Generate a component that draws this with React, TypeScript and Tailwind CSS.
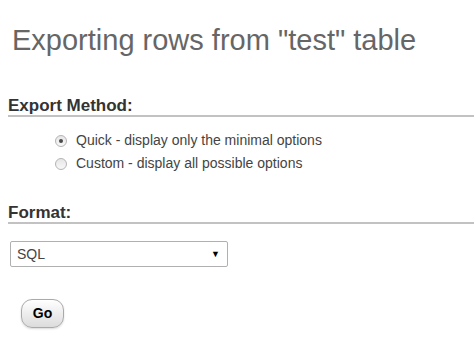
import { useState } from "react";

const options = [
  { id: "quick", label: "Quick - display only the minimal options" },
  { id: "custom", label: "Custom - display all possible options" },
];

function Radio({ checked }: { checked: boolean }) {
  return (
    <span className="flex h-[12px] w-[12px] shrink-0 items-center justify-center rounded-full border border-[#b4b4b4] bg-gradient-to-b from-[#e6e6e6] to-[#f8f8f8]">
      {checked && <span className="h-[4px] w-[4px] rounded-full bg-[#4a4a4a]" />}
    </span>
  );
}

export default function App() {
  const [method, setMethod] = useState("quick");

  return (
    <div className="h-[364px] w-[474px] overflow-hidden bg-white font-['Liberation_Sans',Arial,sans-serif]">
      <h2 className="pl-[12px] pt-[24px] text-[29px] leading-[32px] font-normal text-[#666]">
        Exporting rows from "test" table
      </h2>

      <h3 className="ml-[8px] mt-[40px] border-b-2 border-[#c2c2c2] text-[17px] font-bold leading-[19px] text-[#333]">
        Export Method:
      </h3>

      <div className="mt-[12px] flex flex-col pl-[55px]">
        {options.map((o) => (
          <label
            key={o.id}
            onClick={() => setMethod(o.id)}
            className="flex h-[23px] cursor-pointer items-center gap-[9px] text-[14px] text-[#444]"
          >
            <Radio checked={method === o.id} />
            <span>{o.label}</span>
          </label>
        ))}
      </div>

      <h3 className="ml-[8px] mt-[28px] border-b-2 border-[#c2c2c2] text-[17px] font-bold leading-[19px] text-[#333]">
        Format:
      </h3>

      <div className="ml-[10px] mt-[17px] flex h-[26px] w-[218px] items-center justify-between rounded-[2px] border border-[#b0b0b0] bg-white pl-[6px] pr-[7px] text-[14px] text-[#444]">
        <span>SQL</span>
        <span className="text-[9px] leading-none text-black">▼</span>
      </div>

      <button className="ml-[21px] mt-[32px] flex h-[29px] w-[43px] items-center justify-center rounded-[11px] border border-[#aaa] bg-gradient-to-b from-white to-[#dcdcdc] text-[14px] font-bold text-black shadow-[0_1px_2px_rgba(0,0,0,0.15)]">
        Go
      </button>
    </div>
  );
}
